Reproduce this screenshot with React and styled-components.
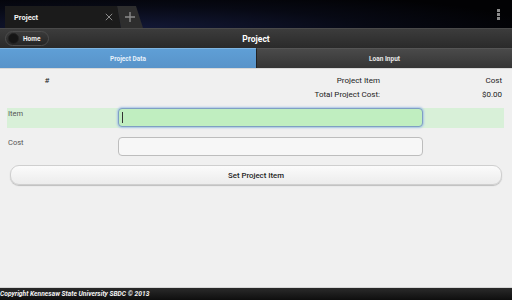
import styled, { createGlobalStyle } from "styled-components";

const Global = createGlobalStyle`
  html, body { margin: 0; padding: 0; }
  body { width: 512px; height: 300px; overflow: hidden; font-family: Roboto, "Liberation Sans", sans-serif; }
`;

export default function App() {
  return (
    <Screen>
      <Global />
      <BrowserBar>
        <Tab>
          <TabTitle>Project</TabTitle>
          <CloseIcon viewBox="0 0 10 10">
            <path d="M1 1 L9 9 M9 1 L1 9" stroke="#9a9a9a" strokeWidth="1.1" />
          </CloseIcon>
        </Tab>
        <NewTab>
          <svg width="10" height="10" viewBox="0 0 10 10">
            <path d="M5 0 V10 M0 5 H10" stroke="#8a8a8a" strokeWidth="1.4" />
          </svg>
        </NewTab>
        <Spacer />
        <MenuDots>
          <Dot />
          <Dot />
          <Dot />
        </MenuDots>
      </BrowserBar>

      <Header>
        <HomeButton>
          <HomeKnob />
          Home
        </HomeButton>
        <Title>Project</Title>
      </Header>

      <Tabs>
        <TabButton active>Project Data</TabButton>
        <TabButton>Loan Input</TabButton>
      </Tabs>

      <Content>
        <SummaryGrid>
          <Cell align="center">#</Cell>
          <Cell align="right">Project Item</Cell>
          <Cell align="right">Cost</Cell>
          <Cell />
          <Cell align="right">Total Project Cost:</Cell>
          <Cell align="right">$0.00</Cell>
        </SummaryGrid>

        <FieldRow focused>
          <Label>Item</Label>
          <Input focused>
            <Caret />
          </Input>
        </FieldRow>
        <FieldRow>
          <Label>Cost</Label>
          <Input />
        </FieldRow>

        <ActionButton>Set Project Item</ActionButton>
      </Content>

      <Footer>Copyright Kennesaw State University SBDC © 2013</Footer>
    </Screen>
  );
}

const Screen = styled.div`
  width: 512px;
  height: 300px;
  display: flex;
  flex-direction: column;
  background: #f0f0f0;
`;

const BrowserBar = styled.div`
  height: 28px;
  display: flex;
  align-items: flex-end;
  padding-left: 5px;
  background: radial-gradient(ellipse 420px 40px at 120px 30px, #141a3a 0%, #070914 60%, #020204 100%);
`;

const Tab = styled.div`
  width: 116px;
  height: 22px;
  background: #1b1b1b;
  display: flex;
  align-items: center;
  justify-content: space-between;
  padding: 0 8px 0 9px;
  box-sizing: border-box;
  clip-path: polygon(0 0, 112px 0, 100% 100%, 0 100%);
`;

const TabTitle = styled.span`
  color: #f2f2f2;
  font-size: 7.5px;
  font-weight: 700;
`;

const CloseIcon = styled.svg`
  width: 8px;
  height: 8px;
`;

const NewTab = styled.div`
  width: 26px;
  height: 22px;
  margin-left: -4px;
  background: #2e2e2e;
  display: flex;
  align-items: center;
  justify-content: center;
  clip-path: polygon(0 0, 19px 0, 100% 100%, 4px 100%);
`;

const Spacer = styled.div`
  flex: 1;
`;

const MenuDots = styled.div`
  align-self: center;
  display: flex;
  flex-direction: column;
  gap: 1px;
  margin-right: 12px;
`;

const Dot = styled.div`
  width: 3px;
  height: 3px;
  background: #8c8c8c;
`;

const Header = styled.div`
  height: 20px;
  position: relative;
  display: flex;
  align-items: center;
  padding-left: 5px;
  background: linear-gradient(#3c3c3c, #2a2a2a);
  border-top: 1px solid #4a4a4a;
  box-sizing: border-box;
`;

const HomeButton = styled.div`
  width: 44px;
  height: 15px;
  box-sizing: border-box;
  border-radius: 8px;
  border: 1px solid #4c4c4c;
  background: linear-gradient(#3a3a3a, #262626);
  display: flex;
  align-items: center;
  gap: 4px;
  padding-left: 2px;
  color: #eeeeee;
  font-size: 6.5px;
  font-weight: 700;
`;

const HomeKnob = styled.div`
  width: 9px;
  height: 9px;
  border-radius: 50%;
  background: #151515;
  border: 1px solid #222;
`;

const Title = styled.div`
  position: absolute;
  left: 0;
  right: 0;
  text-align: center;
  color: #ffffff;
  font-size: 8.5px;
  font-weight: 700;
  pointer-events: none;
`;

const Tabs = styled.div`
  height: 20px;
  display: grid;
  grid-template-columns: 1fr 1fr;
  border-bottom: 1px solid #d8d8d8;
`;

const TabButton = styled.div`
  display: flex;
  align-items: center;
  justify-content: center;
  font-size: 6.5px;
  font-weight: 700;
  color: ${(p) => (p.active ? "#e6f0fa" : "#e8e8e8")};
  background: ${(p) =>
    p.active
      ? "linear-gradient(#5f9fd6, #5893c9)"
      : "linear-gradient(#4a4a4a, #353535)"};
  border-top: 1px solid ${(p) => (p.active ? "#7fb6e3" : "#555")};
  border-left: ${(p) => (p.active ? "none" : "1px solid #222")};
`;

const Content = styled.div`
  flex: 1;
  display: flex;
  flex-direction: column;
  padding: 7px 8px 0 7px;
`;

const SummaryGrid = styled.div`
  display: grid;
  grid-template-columns: 80px 293px 122px;
  row-gap: 4px;
  margin-bottom: 8px;
  color: #222;
  font-size: 8px;
`;

const Cell = styled.div`
  text-align: ${(p) => p.align || "left"};
  height: 10px;
  line-height: 10px;
`;

const FieldRow = styled.div`
  display: flex;
  align-items: flex-start;
  height: 20px;
  margin-bottom: 9px;
  background: ${(p) => (p.focused ? "#d8f0d8" : "transparent")};
  width: 497px;
`;

const Label = styled.div`
  width: 110px;
  padding-left: 1px;
  padding-top: 1px;
  color: #555;
  font-size: 7.5px;
`;

const Input = styled.div`
  width: 305px;
  height: 19px;
  box-sizing: border-box;
  border-radius: 4px;
  display: flex;
  align-items: center;
  padding-left: 3px;
  background: ${(p) => (p.focused ? "#c0eec0" : "#f7f7f7")};
  border: 1px solid ${(p) => (p.focused ? "#7f9fc4" : "#bdbdbd")};
  box-shadow: ${(p) => (p.focused ? "0 0 2px 1px #a9c4e6" : "none")};
`;

const Caret = styled.div`
  width: 1px;
  height: 11px;
  background: #333;
`;

const ActionButton = styled.div`
  margin: -1px 2px 0 3px;
  height: 20px;
  box-sizing: border-box;
  border-radius: 9px;
  border: 1px solid #cfcfcf;
  box-shadow: 0 1px 1px #bdbdbd;
  background: linear-gradient(#fbfbfb, #ececec);
  display: flex;
  align-items: center;
  justify-content: center;
  color: #222;
  font-size: 7.8px;
  font-weight: 500;
`;

const Footer = styled.div`
  height: 12px;
  line-height: 12px;
  background: linear-gradient(#2a2a2a, #0e0e0e);
  color: #f4f4f4;
  font-size: 6.7px;
  font-weight: 700;
  font-style: italic;
  border-top: 1px solid #d6d6d6;
`;
